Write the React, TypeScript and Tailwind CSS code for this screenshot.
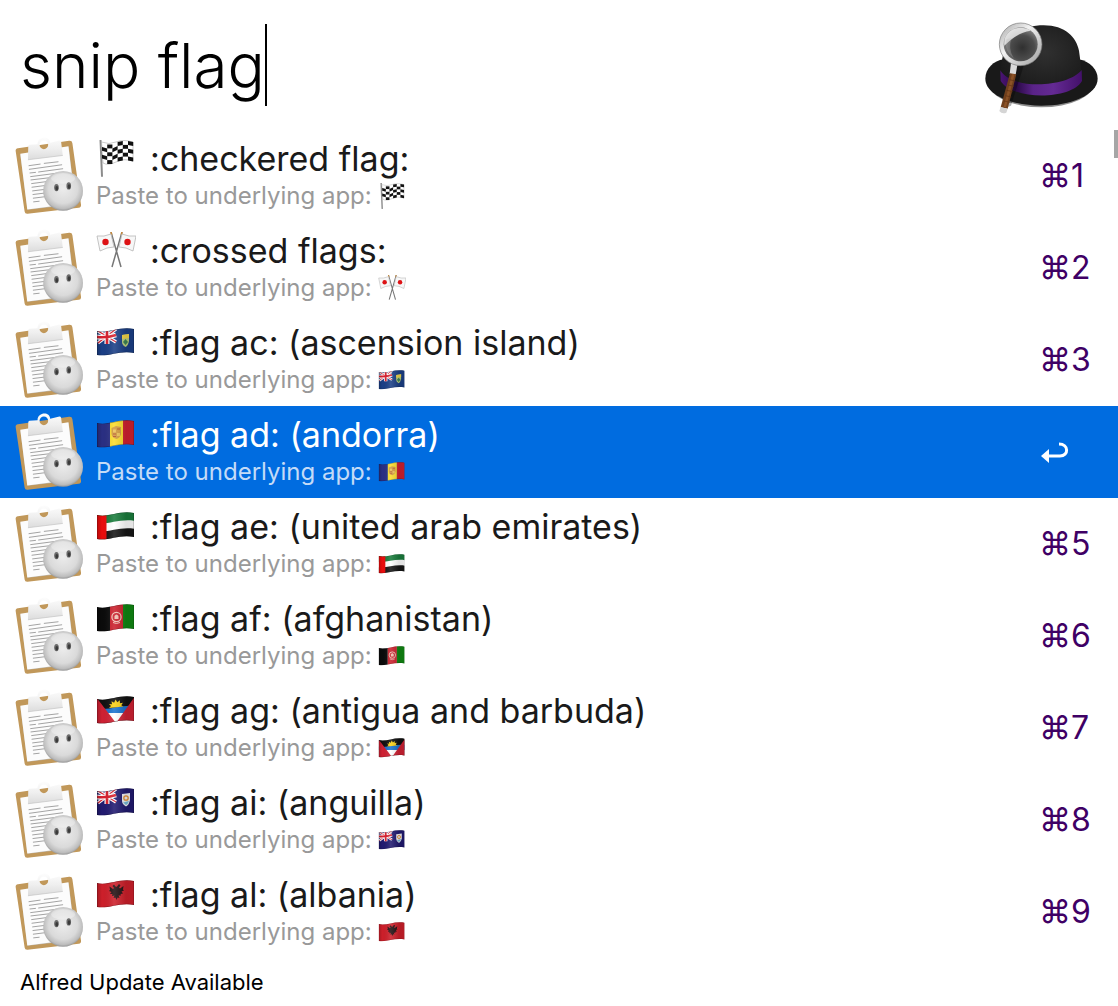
import React, { useId, useState } from "react";

type FlagName = "checkered" | "crossed" | "ac" | "ad" | "ae" | "af" | "ag" | "ai" | "al";

interface Snippet {
    flag: FlagName;
    title: string;
}

const snippets: Snippet[] = [
    { flag: "checkered", title: ":checkered flag:" },
    { flag: "crossed", title: ":crossed flags:" },
    { flag: "ac", title: ":flag ac: (ascension island)" },
    { flag: "ad", title: ":flag ad: (andorra)" },
    { flag: "ae", title: ":flag ae: (united arab emirates)" },
    { flag: "af", title: ":flag af: (afghanistan)" },
    { flag: "ag", title: ":flag ag: (antigua and barbuda)" },
    { flag: "ai", title: ":flag ai: (anguilla)" },
    { flag: "al", title: ":flag al: (albania)" },
];

/* outline of a waving flag on the 40x38 grid */
const WAVE = "M1 8 C12 11 23 3 38 6 V30 C24 27 13 34 1 32 Z";

const UnionJack: React.FC = () => (
    <>
        <path d="M2 8 L20 19 M20 6 L2 20" stroke="#fff" strokeWidth="3.4" />
        <path d="M2 8 L20 19 M20 6 L2 20" stroke="#d8202f" strokeWidth="1.2" />
        <path d="M11 5 V21 M1 14 Q11 15 20 12" stroke="#fff" strokeWidth="5" fill="none" />
        <path d="M11 5 V21 M1 14 Q11 15 20 12" stroke="#d8202f" strokeWidth="2.6" fill="none" />
    </>
);

const flagArt: Record<Exclude<FlagName, "checkered" | "crossed">, React.ReactNode> = {
    ac: (
        <>
            <rect width="40" height="38" fill="#1b3f86" />
            <UnionJack />
            <path d="M26 12 L33 11 V18 Q32 23 29.500 24 Q26 22 26 19 Z" fill="#b9cf7c" />
            <path d="M26 12 L33 11 V15 L26 16 Z" fill="#f2d548" />
            <path d="M27 19 l2.500 -3 l2.500 3 l-2.500 3z" fill="#3c8455" />
        </>
    ),
    ad: (
        <>
            <rect width="14" height="38" fill="#2a2f83" />
            <rect x="14" width="13" height="38" fill="#fbdc2c" />
            <rect x="27" width="13" height="38" fill="#d1202f" />
            <path d="M15.500 13 L20 11 L25 12 V19 Q24 23 20.500 24 Q16 23 15.500 19 Z" fill="#d39a3e" />
            <path d="M17 14.500 h3 v3 h-3z M21 18 h3 v3 h-3z" fill="#eec158" />
            <path d="M21 14 h3 M17 19 h3 M17 21.500 h3" stroke="#b65228" />
        </>
    ),
    ae: (
        <>
            <rect width="40" height="38" fill="#fff" />
            <path d="M0 0 H40 V14 C24 11 13 18 0 16 Z" fill="#1a7d3d" />
            <path d="M0 24 C13 26 24 19 40 22 V38 H0 Z" fill="#161616" />
            <rect width="10.500" height="38" fill="#e90d0d" />
        </>
    ),
    af: (
        <>
            <rect width="14" height="38" fill="#0b0b0b" />
            <rect x="14" width="13" height="38" fill="#cb202c" />
            <rect x="27" width="13" height="38" fill="#108712" />
            <circle cx="20.500" cy="18" r="4.600" fill="none" stroke="#f3c3b5" strokeWidth="1.300" />
            <path d="M18.500 20 v-3 q2-3 4 0 v3z" fill="#f3c3b5" />
            <path d="M17 23.500 q3.500 2 7 0" stroke="#f3c3b5" fill="none" />
        </>
    ),
    ag: (
        <>
            <rect width="40" height="38" fill="#111" />
            <path d="M0 17 C13 20 24 13 40 15 V22 H0 Z" fill="#1a73cf" />
            <path d="M0 22 H40 V38 H0 Z" fill="#fff" />
            <path
                d="M13 17 l2-2 -2-2 3 .200 -.500-3 2.600 1.500 1.500-3.200 1.700 2.800 2.600-2 0 3 3-.600 -1.600 2.600 2 1.300 z"
                fill="#fbd116"
            />
            <path d="M0 6 L20 32 L0 40 Z M40 4 L20 32 L40 40 Z" fill="#cf2133" />
        </>
    ),
    ai: (
        <>
            <rect width="40" height="38" fill="#211a70" />
            <UnionJack />
            <path d="M26 11 L34 10 V17 Q33 22 30 23.500 Q26 21 26 18 Z" fill="#eeeef2" />
            <path d="M27 19.500 L33 18 Q32 21 30 22 Z" fill="#74b8d8" />
            <circle cx="30" cy="15" r="2.200" fill="none" stroke="#e59133" strokeWidth="1.300" />
        </>
    ),
    al: (
        <>
            <rect width="40" height="38" fill="#cd1f2a" />
            <path
                d="M20 12 L18 9.500 L16.500 11 L18 13 L17 14 L13.500 11.500 L14 15 L13 16 L15.500 17 L14 19 L16.500 19 L16 21 L18.500 20.500 L17.500 23 L19.500 22.500 L20.500 25 L21.500 22.500 L23.500 23 L22.500 20.500 L25 20.500 L24.500 19 L27 18.500 L25.500 16.500 L28 15.500 L27 14.500 L27.500 11 L24 13.500 L23 12.500 L24.500 10.500 L23 9 L21 11.500 Z"
                fill="#231012"
            />
        </>
    ),
};

/* top edge of the checkered cloth at each column */
const waveY = [5, 6.5, 6.5, 4, 3, 3, 4];

const CheckeredFlag: React.FC = () => (
    <>
        <path d="M4.500 1 L6 37" stroke="#8c8c8c" strokeWidth="2" strokeLinecap="round" />
        <path d="M5.500 3 Q13 6 20 3 T37 3 L37 22 Q28 19 20 23 T7 24 Z" fill="#fff" stroke="#999" strokeWidth=".5" />
        {[0, 1, 2, 3, 4].map((row) =>
            [0, 1, 2, 3, 4, 5].map((col) =>
                (row + col) % 2 === 1 ? (
                    <path
                        key={`${row}-${col}`}
                        d={`M${6 + col * 5.2} ${waveY[col] - 1 + row * 3.9} L${11.2 + col * 5.2} ${waveY[col + 1] - 1 + row * 3.9} v3.9 L${6 + col * 5.2} ${waveY[col] + 2.9 + row * 3.9} Z`}
                        fill="#111"
                    />
                ) : null
            )
        )}
    </>
);

const CrossedFlags: React.FC = () => (
    <>
        <path d="M15 1 L25 36 M26 1 L16 36" stroke="#777" strokeWidth="1.500" />
        <path d="M15 1 l.600 3 M26 1 l-.600 3" stroke="#c78a3b" strokeWidth="1.600" />
        <path d="M1 5 Q8 6 15 3 L18 16 Q11 16 4 20 Z" fill="#f7f7f7" stroke="#b5b5b5" strokeWidth=".8" />
        <path d="M40 5 Q33 6 26 3 L23 16 Q30 16 37 20 Z" fill="#f7f7f7" stroke="#b5b5b5" strokeWidth=".8" />
        <circle cx="9.500" cy="11" r="3.200" fill="#dd1215" />
        <circle cx="31.500" cy="11" r="3.200" fill="#dd1215" />
    </>
);

const FlagIcon: React.FC<{ name: FlagName; className: string }> = ({ name, className }) => {
    const id = useId();
    return (
        <svg viewBox="0 1 40 38" className={className} aria-hidden="true">
            {name === "checkered" ? (
                <CheckeredFlag />
            ) : name === "crossed" ? (
                <CrossedFlags />
            ) : (
                <>
                    <clipPath id={`${id}-clip`}>
                        <path d={WAVE} />
                    </clipPath>
                    <linearGradient id={`${id}-shade`}>
                        <stop offset="0" stopColor="#000" stopOpacity=".25" />
                        <stop offset=".15" stopColor="#000" stopOpacity="0" />
                        <stop offset=".45" stopColor="#fff" stopOpacity=".12" />
                        <stop offset=".75" stopColor="#000" stopOpacity=".12" />
                        <stop offset="1" stopColor="#000" stopOpacity=".1" />
                    </linearGradient>
                    <g clipPath={`url(#${id}-clip)`}>
                        {flagArt[name]}
                        <rect width="40" height="38" fill={`url(#${id}-shade)`} />
                        <path d={WAVE} fill="none" stroke="#000" strokeOpacity=".3" />
                    </g>
                </>
            )}
        </svg>
    );
};

const ClipboardIcon: React.FC = () => {
    const id = useId();
    return (
        <svg viewBox="44 20 208 234" className="h-[78px] w-[69px] shrink-0" aria-hidden="true">
            <radialGradient id={`${id}-face`} cx=".5" cy=".45" r=".56">
                <stop offset="0" stopColor="#ececec" />
                <stop offset=".65" stopColor="#dadada" />
                <stop offset=".88" stopColor="#bdbdbd" />
                <stop offset="1" stopColor="#8f8f8f" />
            </radialGradient>
            <linearGradient id={`${id}-clip`} x1="0" y1="0" x2="0" y2="1">
                <stop offset="0" stopColor="#fdfdfd" />
                <stop offset=".5" stopColor="#efefef" />
                <stop offset="1" stopColor="#dcdcdc" />
            </linearGradient>
            <path d="M46 62 Q45 54 53 53 L207 31 Q216 30 217 38 L243 224 Q244 232 236 233 L82 251 Q74 252 73 244 Z" fill="#c1985a" />
            <path d="M60 73 L206 49 L227 222 L82 239 Z" fill="#b9b4ab" />
            <path d="M60 70 L205 47 L226 219 L81 238 Z" fill="#fcfcfc" />
            <g stroke="#a2a2a2" strokeWidth="3">
                <path d="M85 106 L121 101 M131 99 L175 94" />
                <path d="M86 117 L186 103 M88 128 L107 126 M114 125 L189 115" />
                <path d="M90 139 L190 126 M91 149 L150 142 M93 160 L146 153" />
                <path d="M94 171 L140 165 M96 182 L137 177 M97 193 L137 188" />
                <path d="M98 204 L138 199 M99 215 L118 213" />
            </g>
            {/* metal clip, the hole shows whatever is behind it */}
            <path
                d="M112 41 C112 17 149 14 150 37 L178 30 Q182 30 183 34 L188 75 L83 88 L84 48 Q84 44 88 43 Z M118 43 A13 13 0 0 0 144 43 A13 13 0 0 0 118 43 Z"
                fill={`url(#${id}-clip)`}
                fillRule="evenodd"
            />
            <path d="M83 88 L188 75" stroke="#c3c3c3" strokeWidth="2" />
            <circle cx="189" cy="182" r="60" fill={`url(#${id}-face)`} />
            <ellipse cx="189" cy="144" rx="36" ry="16" fill="#fff" fillOpacity=".3" />
            <ellipse cx="169" cy="172" rx="7" ry="11" fill="#6b6b6b" />
            <ellipse cx="206" cy="167" rx="7" ry="11" fill="#6b6b6b" />
            <ellipse cx="170" cy="174" rx="4" ry="7" fill="#3a3a3a" />
            <ellipse cx="207" cy="169" rx="4" ry="7" fill="#3a3a3a" />
        </svg>
    );
};

/* bowler hat with the magnifying glass leaning on it */
const HatLogo: React.FC = () => (
    <svg viewBox="44 40 339 279" className="h-[93px] w-[113px] overflow-visible" role="img" aria-label="Alfred">
        <defs>
            <radialGradient id="hat-crown" cx=".55" cy=".4" r=".6">
                <stop offset="0" stopColor="#303030" />
                <stop offset="1" stopColor="#1a1a1a" />
            </radialGradient>
            <linearGradient id="hat-band">
                <stop offset="0" stopColor="#4a1474" />
                <stop offset=".2" stopColor="#2b0a48" />
                <stop offset=".4" stopColor="#5a2388" />
                <stop offset=".65" stopColor="#642a93" />
                <stop offset="1" stopColor="#43106a" />
            </linearGradient>
            <radialGradient id="hat-lens" cx=".55" cy=".6" r=".6">
                <stop offset="0" stopColor="#303030" />
                <stop offset=".6" stopColor="#4c4c4c" />
                <stop offset="1" stopColor="#8a8a8a" />
            </radialGradient>
            <linearGradient id="hat-rim" x1="0" y1="0" x2="1" y2="1">
                <stop offset="0" stopColor="#a5a5a5" />
                <stop offset=".4" stopColor="#f2f2f2" />
                <stop offset="1" stopColor="#9c9c9c" />
            </linearGradient>
        </defs>
        <ellipse cx="213" cy="214" rx="160" ry="76" fill="#8d8d8d" />
        <path d="M45 204 C45 174 70 150 100 146 L325 146 C360 152 382 178 382 204 C382 252 300 285 213 285 C124 285 45 252 45 204 Z" fill="#191919" />
        <path d="M91 215 C91 165 94 120 120 85 C140 56 180 44 220 44 C285 44 318 80 326 120 C331 150 331 175 335 200 C310 255 130 260 91 215 Z" fill="url(#hat-crown)" />
        <path d="M90 179 C125 238 290 232 334 178 L335 211 C300 270 125 268 91 211 Z" fill="url(#hat-band)" />
        <path d="M130 165 L160 165 L122 285 L96 296 Z" fill="#000" fillOpacity=".3" />
        <path d="M122 156 L142 158 L136 192 L118 189 Z" fill="#dadada" />
        <path d="M119 188 L138 191 L112 294 L91 290 Z" fill="#71401d" />
        <path d="M125 190 L133 191 L107 290 L100 289 Z" fill="#8c5226" />
        <path d="M117 207 l18 4 M113 223 l18 4 M109 239 l18 4 M105 255 l18 4 M101 271 l18 4" stroke="#5f3113" strokeWidth="2" />
        <path d="M91 289 L112 294 L108 306 Q95 312 87 301 Z" fill="#d5d5d5" />
        <circle cx="151" cy="101" r="64" fill="url(#hat-rim)" />
        <circle cx="151" cy="101" r="64" fill="none" stroke="#777" strokeWidth="2" />
        <circle cx="151" cy="101" r="51" fill="url(#hat-lens)" />
        <path d="M102 105 C96 60 145 38 181 60 C150 64 125 83 102 105 Z" fill="#fff" fillOpacity=".75" />
        <path d="M108 86 Q100 122 130 143 Q112 112 124 82 Z" fill="#bbb" fillOpacity=".3" />
    </svg>
);

const ReturnArrow: React.FC = () => (
    <svg viewBox="-2 -1 30 24" className="h-6 w-[30px]" role="img" aria-label="Return">
        <path d="M0 15 L8 8 V22 Z" fill="#fff" />
        <path d="M7 15 H19 C28 15 28 3 18 3" fill="none" stroke="#fff" strokeWidth="3" />
    </svg>
);

const ResultRow: React.FC<{
    snippet: Snippet;
    index: number;
    selected: boolean;
    onSelect: () => void;
}> = ({ snippet, index, selected, onSelect }) => (
    <li>
        <button
            type="button"
            onClick={onSelect}
            aria-current={selected}
            className={`flex h-[92px] w-full items-center gap-3 pl-[15px] text-left ${selected ? "bg-[#006ce0] text-white" : "text-[#1a1a1a]"
                }`}
        >
            <ClipboardIcon />
            <span className="min-w-0 flex-1">
                <span className="flex items-center gap-3.5">
                    <FlagIcon name={snippet.flag} className="h-[38px] w-10 shrink-0" />
                    <span className="text-[34px] leading-[38px]">{snippet.title}</span>
                </span>
                <span className={`mt-0.5 flex items-center gap-1.5 ${selected ? "text-[#c4dbf7]" : "text-[#999999]"}`}>
                    <span className="text-[24px] leading-8">Paste to underlying app:</span>
                    <FlagIcon name={snippet.flag} className="h-[27px] w-7 shrink-0" />
                </span>
            </span>
            <span className="w-[79px] shrink-0 text-[32px] leading-10 text-[#3f0065]">
                {selected ? <ReturnArrow /> : `⌘${index + 1}`}
            </span>
        </button>
    </li>
);

const App: React.FC = () => {
    const [query, setQuery] = useState("snip flag");
    const [active, setActive] = useState(3);

    return (
        <main className="min-h-screen bg-white font-['Inter',sans-serif]">
            <header className="flex h-[130px] items-start justify-between px-5 pt-6">
                <div className="flex items-center">
                    <input
                        type="text"
                        aria-label="Search"
                        value={query}
                        onChange={(e) => setQuery(e.target.value)}
                        className="field-sizing-content h-[82px] text-[62px] font-light text-black caret-transparent outline-none"
                    />
                    {/* tall caret */}
                    <span className="h-[82px] w-[2px] bg-black" />
                </div>
                <HatLogo />
            </header>

            <div className="relative">
                <ul>
                    {snippets.map((snippet, index) => (
                        <ResultRow
                            key={snippet.flag}
                            snippet={snippet}
                            index={index}
                            selected={index === active}
                            onSelect={() => setActive(index)}
                        />
                    ))}
                </ul>
                {/* scroll thumb */}
                <div className="absolute top-0 right-0 h-7 w-1 bg-[#a6a6a6]" />
            </div>

            <footer className="flex h-12 items-center px-5 text-[22px] text-black">
                Alfred Update Available
            </footer>
        </main>
    );
};

export default App;
